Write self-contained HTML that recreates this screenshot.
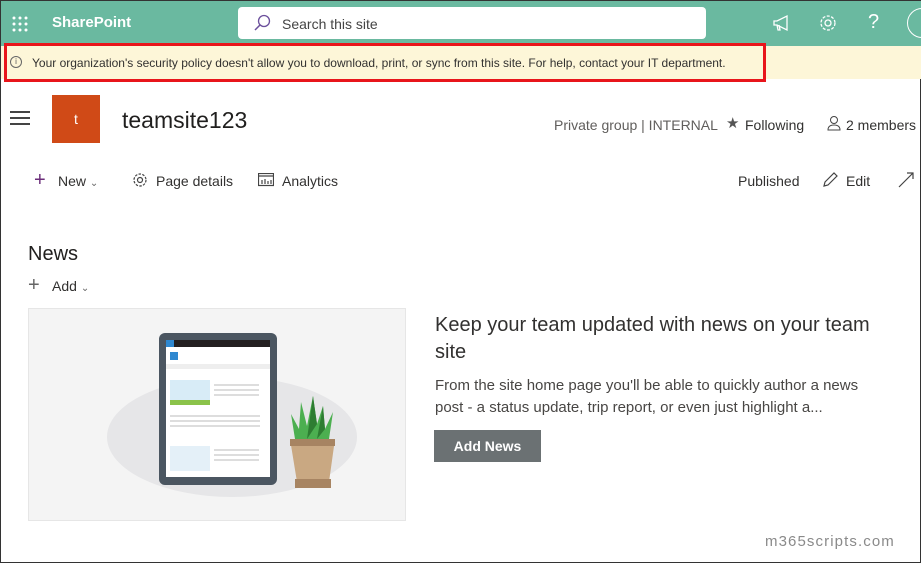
<!DOCTYPE html>
<html><head><meta charset="utf-8"><style>
*{margin:0;padding:0;box-sizing:border-box}
body{width:921px;height:563px;overflow:hidden;background:#fff;font-family:"Liberation Sans",sans-serif;color:#323130;position:relative;border:1px solid #333}
.a{position:absolute;white-space:nowrap}
</style></head><body>
<div class="a" style="left:0;top:0;width:921px;height:45px;background:#6ab9a0"></div>
<svg class="a" style="left:10px;top:14px" width="18" height="18"><g fill="#fff"><circle cx="3" cy="3" r="1.5"/><circle cx="9" cy="3" r="1.5"/><circle cx="15" cy="3" r="1.5"/><circle cx="3" cy="9" r="1.5"/><circle cx="9" cy="9" r="1.5"/><circle cx="15" cy="9" r="1.5"/><circle cx="3" cy="15" r="1.5"/><circle cx="9" cy="15" r="1.5"/><circle cx="15" cy="15" r="1.5"/></g></svg>
<div class="a" style="left:51px;top:13px;color:#fff;font-weight:bold;font-size:15px">SharePoint</div>
<div class="a" style="left:237px;top:6px;width:468px;height:32px;background:#fff;border-radius:4px"></div>
<svg class="a" style="left:252px;top:13px" width="18" height="18"><circle cx="11" cy="7" r="5.5" fill="none" stroke="#6b4f9c" stroke-width="1.3"/><path d="M7 11 L2 16" stroke="#6b4f9c" stroke-width="1.5"/></svg>
<div class="a" style="left:281px;top:15px;font-size:14px;color:#444">Search this site</div>
<svg class="a" style="left:770px;top:12px" width="20" height="20" fill="none" stroke="#fff" stroke-width="1.3"><path d="M3 8h3l10-5v14L6 12H3z M6 12l1 5h2l-1-5"/></svg>
<svg class="a" style="left:817px;top:12px" width="20" height="20" fill="none" stroke="#fff" stroke-width="1.3"><circle cx="10" cy="10" r="3"/><circle cx="10" cy="10" r="7" stroke-dasharray="3 1.5"/></svg>
<div class="a" style="left:867px;top:10px;color:#fff;font-size:20px">?</div>
<div class="a" style="left:906px;top:7px;width:30px;height:30px;border:1.5px solid #fff;border-radius:50%"></div>
<div class="a" style="left:0;top:45px;width:921px;height:33px;background:#fdf6d8"></div>
<div class="a" style="left:3px;top:42px;width:762px;height:39px;border:3px solid #e8151b"></div>
<div class="a" style="left:9px;top:55px;width:12px;height:12px;border:1px solid #666;border-radius:50%;font-size:8px;text-align:center;line-height:10px;color:#555">i</div>
<div class="a" style="left:31px;top:55px;font-size:12px;color:#323130">Your organization's security policy doesn't allow you to download, print, or sync from this site. For help, contact your IT department.</div>
<div class="a" style="left:9px;top:110px;width:20px;height:2px;background:#444;box-shadow:0 6px 0 #444,0 12px 0 #444"></div>
<div class="a" style="left:51px;top:94px;width:48px;height:48px;background:#d04a17;color:#fff;font-size:14px;text-align:center;line-height:48px">t</div>
<div class="a" style="left:121px;top:106px;font-size:23px;color:#201f1e">teamsite123</div>
<div class="a" style="left:553px;top:116px;font-size:14px;color:#605e5c">Private group | INTERNAL</div>
<div class="a" style="left:725px;top:113px;font-size:15px;color:#555">★</div>
<div class="a" style="left:744px;top:116px;font-size:14px">Following</div>
<svg class="a" style="left:826px;top:114px" width="14" height="16" fill="none" stroke="#444"><circle cx="7" cy="5" r="3.5"/><path d="M1 15c0-4 3-5 6-5s6 1 6 5z"/></svg>
<div class="a" style="left:845px;top:116px;font-size:14px">2 members</div>
<div class="a" style="left:33px;top:172px;font-size:20px;color:#6b2d7a;line-height:14px;font-weight:300">+</div>
<div class="a" style="left:57px;top:172px;font-size:14px">New <span style="font-size:10px;color:#666">&#8964;</span></div>
<svg class="a" style="left:131px;top:171px" width="16" height="16" fill="none" stroke="#444" stroke-width="1.2"><circle cx="8" cy="8" r="2.5"/><circle cx="8" cy="8" r="6" stroke-dasharray="2.5 1.3"/></svg>
<div class="a" style="left:155px;top:172px;font-size:14px">Page details</div>
<svg class="a" style="left:257px;top:172px" width="16" height="14" fill="none" stroke="#444" stroke-width="1.2"><rect x="0.5" y="0.5" width="15" height="12"/><path d="M1 3h14M4 11V7M7 11V6M10 11V8M13 11V7"/></svg>
<div class="a" style="left:281px;top:172px;font-size:14px">Analytics</div>
<div class="a" style="left:737px;top:172px;font-size:14px">Published</div>
<svg class="a" style="left:821px;top:171px" width="16" height="16" fill="none" stroke="#444" stroke-width="1.2"><path d="M2 14l1-4L12 1l3 3-9 9z"/></svg>
<div class="a" style="left:845px;top:172px;font-size:14px">Edit</div>
<svg class="a" style="left:897px;top:171px" width="16" height="16" fill="none" stroke="#444" stroke-width="1.2"><path d="M1 15L15 1M9 1h6v6"/></svg>
<div class="a" style="left:27px;top:242px;font-size:20px;color:#201f1e">News</div>
<div class="a" style="left:27px;top:274px;font-size:20px;color:#666;line-height:20px;font-weight:300">+</div>
<div class="a" style="left:51px;top:277px;font-size:14px">Add <span style="font-size:10px;color:#666">&#8964;</span></div>
<div class="a" style="left:27px;top:307px;width:378px;height:213px;background:#f4f4f4;border:1px solid #e6e6e6;overflow:hidden">
<div class="a" style="left:78px;top:68px;width:250px;height:120px;background:#e6e6e8;border-radius:50%"></div>
<div class="a" style="left:130px;top:24px;width:118px;height:152px;background:#4b5661;border-radius:6px"></div>
<div class="a" style="left:137px;top:31px;width:104px;height:137px;background:#fff"></div>
<div class="a" style="left:137px;top:31px;width:104px;height:7px;background:#231f20"></div>
<div class="a" style="left:137px;top:31px;width:8px;height:7px;background:#2f88d0"></div>
<div class="a" style="left:141px;top:43px;width:8px;height:8px;background:#2f88d0"></div>
<div class="a" style="left:137px;top:55px;width:104px;height:5px;background:#eee"></div>
<div class="a" style="left:141px;top:71px;width:40px;height:25px;background:#d8ecf7;border-bottom:5px solid #8bc34a"></div>
<div class="a" style="left:141px;top:137px;width:40px;height:25px;background:#e4f0f8"></div>
<div class="a" style="left:185px;top:75px;width:45px;height:2px;background:#ddd;box-shadow:0 5px 0 #ddd,0 10px 0 #ddd"></div>
<div class="a" style="left:141px;top:106px;width:90px;height:2px;background:#ddd;box-shadow:0 5px 0 #ddd,0 10px 0 #ddd"></div>
<div class="a" style="left:185px;top:140px;width:45px;height:2px;background:#ddd;box-shadow:0 5px 0 #ddd,0 10px 0 #ddd"></div>
<svg class="a" style="left:258px;top:85px" width="52" height="100"><path d="M8 45 L4 20 L12 35 L14 8 L20 32 L26 2 L30 30 L36 12 L38 35 L46 18 L42 45 Z" fill="#4caf50"/><path d="M20 45 L26 2 L30 30 Z M36 12 L38 35 L30 45Z" fill="#2e7d32"/><path d="M3 45 H48 L42 88 H10 Z" fill="#c9a882"/><path d="M3 45 H48 V52 H3Z" fill="#a78462"/><path d="M8 85 H44 V94 H8Z" fill="#a78462"/></svg>
</div>
<div class="a" style="left:434px;top:311px;font-size:20px;line-height:27px;color:#323130">Keep your team updated with news on your team<br>site</div>
<div class="a" style="left:434px;top:374px;font-size:15px;line-height:22px;color:#484644">From the site home page you'll be able to quickly author a news<br>post - a status update, trip report, or even just highlight a...</div>
<div class="a" style="left:433px;top:429px;width:107px;height:32px;background:#6b7173;color:#fff;font-size:14px;font-weight:bold;text-align:center;line-height:32px">Add News</div>
<div class="a" style="left:764px;top:532px;font-size:15px;letter-spacing:1.1px;color:#8a8a8a">m365scripts.com</div>
</body></html>
